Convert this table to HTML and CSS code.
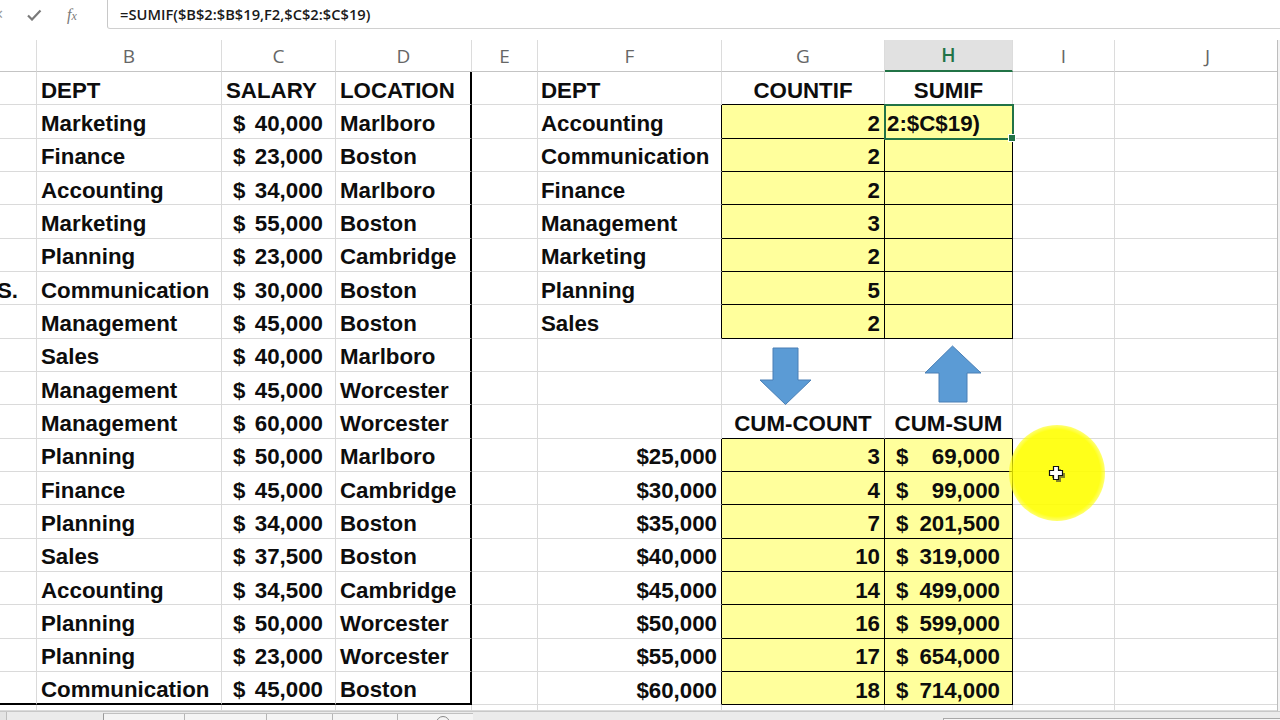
FILE: index.html
```html
<!DOCTYPE html>
<html>
<head>
<meta charset="utf-8">
<link rel="stylesheet" href="styles.css">
</head>
<body>
<div class="app">
  <div class="fbar">
    <div class="fb-icons">
      <span class="ic-x">✕</span>
      <svg class="ic-check" width="16" height="12" viewBox="0 0 16 12"><path d="M2 6.5 L6 10.5 L14.5 1.5" fill="none" stroke="#7a7a7a" stroke-width="2.2"/></svg>
      <span class="ic-fx"><i>f</i><span class="fx-x">x</span></span>
    </div>
    <div class="fb-input">=SUMIF($B$2:$B$19,F2,$C$2:$C$19)</div>
  </div>
  <div class="gap"></div>
  <div class="main">
    <div class="grid">
      <!-- header -->
      <div class="h"></div><div class="h">B</div><div class="h">C</div><div class="h">D</div><div class="h">E</div><div class="h">F</div><div class="h">G</div><div class="h hs">H</div><div class="h">I</div><div class="h">J</div>
      <!-- 1 -->
      <div class="c"></div><div class="c">DEPT</div><div class="c">SALARY</div><div class="c tr">LOCATION</div><div class="c"></div><div class="c fl">DEPT</div><div class="c ctr kb">COUNTIF</div><div class="c ctr kb">SUMIF</div><div class="c"></div><div class="c"></div>
      <!-- 2 -->
      <div class="c"></div><div class="c">Marketing</div><div class="c acc"><span>$</span><span>40,000</span></div><div class="c tr">Marlboro</div><div class="c"></div><div class="c fl kr">Accounting</div><div class="c y r">2</div><div class="c y sel">2:$C$19)</div><div class="c"></div><div class="c"></div>
      <!-- 3 -->
      <div class="c"></div><div class="c">Finance</div><div class="c acc"><span>$</span><span>23,000</span></div><div class="c tr">Boston</div><div class="c"></div><div class="c fl kr">Communication</div><div class="c y r">2</div><div class="c y"></div><div class="c"></div><div class="c"></div>
      <!-- 4 -->
      <div class="c"></div><div class="c">Accounting</div><div class="c acc"><span>$</span><span>34,000</span></div><div class="c tr">Marlboro</div><div class="c"></div><div class="c fl kr">Finance</div><div class="c y r">2</div><div class="c y"></div><div class="c"></div><div class="c"></div>
      <!-- 5 -->
      <div class="c"></div><div class="c">Marketing</div><div class="c acc"><span>$</span><span>55,000</span></div><div class="c tr">Boston</div><div class="c"></div><div class="c fl kr">Management</div><div class="c y r">3</div><div class="c y"></div><div class="c"></div><div class="c"></div>
      <!-- 6 -->
      <div class="c"></div><div class="c">Planning</div><div class="c acc"><span>$</span><span>23,000</span></div><div class="c tr">Cambridge</div><div class="c"></div><div class="c fl kr">Marketing</div><div class="c y r">2</div><div class="c y"></div><div class="c"></div><div class="c"></div>
      <!-- 7 -->
      <div class="c a-over">S.</div><div class="c">Communication</div><div class="c acc"><span>$</span><span>30,000</span></div><div class="c tr">Boston</div><div class="c"></div><div class="c fl kr">Planning</div><div class="c y r">5</div><div class="c y"></div><div class="c"></div><div class="c"></div>
      <!-- 8 -->
      <div class="c"></div><div class="c">Management</div><div class="c acc"><span>$</span><span>45,000</span></div><div class="c tr">Boston</div><div class="c"></div><div class="c fl kr">Sales</div><div class="c y r">2</div><div class="c y"></div><div class="c"></div><div class="c"></div>
      <!-- 9 -->
      <div class="c"></div><div class="c">Sales</div><div class="c acc"><span>$</span><span>40,000</span></div><div class="c tr">Marlboro</div><div class="c"></div><div class="c"></div><div class="c"></div><div class="c"></div><div class="c"></div><div class="c"></div>
      <!-- 10 -->
      <div class="c"></div><div class="c">Management</div><div class="c acc"><span>$</span><span>45,000</span></div><div class="c tr">Worcester</div><div class="c"></div><div class="c"></div><div class="c"></div><div class="c"></div><div class="c"></div><div class="c"></div>
      <!-- 11 -->
      <div class="c"></div><div class="c">Management</div><div class="c acc"><span>$</span><span>60,000</span></div><div class="c tr">Worcester</div><div class="c"></div><div class="c"></div><div class="c ctr kb">CUM-COUNT</div><div class="c ctr kb">CUM-SUM</div><div class="c"></div><div class="c"></div>
      <!-- 12 -->
      <div class="c"></div><div class="c">Planning</div><div class="c acc"><span>$</span><span>50,000</span></div><div class="c tr">Marlboro</div><div class="c"></div><div class="c r kr">$25,000</div><div class="c y r">3</div><div class="c y acc"><span>$</span><span>69,000</span></div><div class="c"></div><div class="c"></div>
      <!-- 13 -->
      <div class="c"></div><div class="c">Finance</div><div class="c acc"><span>$</span><span>45,000</span></div><div class="c tr">Cambridge</div><div class="c"></div><div class="c r kr">$30,000</div><div class="c y r">4</div><div class="c y acc"><span>$</span><span>99,000</span></div><div class="c"></div><div class="c"></div>
      <!-- 14 -->
      <div class="c"></div><div class="c">Planning</div><div class="c acc"><span>$</span><span>34,000</span></div><div class="c tr">Boston</div><div class="c"></div><div class="c r kr">$35,000</div><div class="c y r">7</div><div class="c y acc"><span>$</span><span>201,500</span></div><div class="c"></div><div class="c"></div>
      <!-- 15 -->
      <div class="c"></div><div class="c">Sales</div><div class="c acc"><span>$</span><span>37,500</span></div><div class="c tr">Boston</div><div class="c"></div><div class="c r kr">$40,000</div><div class="c y r">10</div><div class="c y acc"><span>$</span><span>319,000</span></div><div class="c"></div><div class="c"></div>
      <!-- 16 -->
      <div class="c"></div><div class="c">Accounting</div><div class="c acc"><span>$</span><span>34,500</span></div><div class="c tr">Cambridge</div><div class="c"></div><div class="c r kr">$45,000</div><div class="c y r">14</div><div class="c y acc"><span>$</span><span>499,000</span></div><div class="c"></div><div class="c"></div>
      <!-- 17 -->
      <div class="c"></div><div class="c">Planning</div><div class="c acc"><span>$</span><span>50,000</span></div><div class="c tr">Worcester</div><div class="c"></div><div class="c r kr">$50,000</div><div class="c y r">16</div><div class="c y acc"><span>$</span><span>599,000</span></div><div class="c"></div><div class="c"></div>
      <!-- 18 -->
      <div class="c"></div><div class="c">Planning</div><div class="c acc"><span>$</span><span>23,000</span></div><div class="c tr">Worcester</div><div class="c"></div><div class="c r kr">$55,000</div><div class="c y r">17</div><div class="c y acc"><span>$</span><span>654,000</span></div><div class="c"></div><div class="c"></div>
      <!-- 19 -->
      <div class="c tb"></div><div class="c tb">Communication</div><div class="c tb acc"><span>$</span><span>45,000</span></div><div class="c tb tr">Boston</div><div class="c"></div><div class="c r kr">$60,000</div><div class="c y r">18</div><div class="c y acc"><span>$</span><span>714,000</span></div><div class="c"></div><div class="c"></div>
      <!-- 20 partial -->
      <div class="c"></div><div class="c"></div><div class="c"></div><div class="c"></div><div class="c"></div><div class="c"></div><div class="c"></div><div class="c"></div><div class="c"></div><div class="c"></div>
    </div>
    <div class="vscroll"></div>
  </div>
  <div class="bottom">
    <div class="b-left"></div>
    <div class="tabs">
      <div class="tab t1"></div><div class="tab t2"></div><div class="tab t3"></div><div class="tab t4"></div>
      <div class="add"></div>
    </div>
    <div class="b-mid"></div>
    <div class="hscroll"></div>
  </div>

  <svg class="overlay" width="1280" height="720" viewBox="0 0 1280 720">
    <polygon points="773,348 798,348 798,380 811,380 785.5,404.5 760,380 773,380" fill="#5b9bd5" stroke="#4a7fb5" stroke-width="1"/>
    <polygon points="952.5,346 981,373 967,373 967,402 939,402 939,373 925,373" fill="#5b9bd5" stroke="#4a7fb5" stroke-width="1"/>
    <defs>
      <radialGradient id="glow" cx="50%" cy="50%" r="50%">
        <stop offset="0.9" stop-color="#ffff00" stop-opacity="0.9"/>
        <stop offset="1" stop-color="#ffff00" stop-opacity="0.55"/>
      </radialGradient>
    </defs>
    <circle cx="1057" cy="473" r="48" fill="url(#glow)"/>
    <path d="M1054.5 467.5 h5 v4 h4 v5 h-4 v4 h-5 v-4 h-4 v-5 h4 z" fill="#333" transform="translate(1.5,1.5)" opacity="0.6"/>
    <path d="M1053.5 466.5 h5 v4 h4 v5 h-4 v4 h-5 v-4 h-4 v-5 h4 z" fill="#fff" stroke="#111" stroke-width="1.2"/>
  </svg>
</div>
</body>
</html>
```
FILE: styles.css
```css
* { box-sizing: border-box; }
body { margin: 0; background: #fff; overflow: hidden; }
.app {
  position: relative;
  width: 1280px;
  height: 720px;
  overflow: hidden;
  background: #fff;
  font-family: "Liberation Sans", Arial, sans-serif;
}

/* formula bar */
.fbar { display: flex; height: 29px; }
.fb-icons {
  width: 107px;
  display: flex;
  align-items: center;
  color: #7a7a7a;
}
.ic-x { margin-left: -7px; width: 10px; font-size: 13px; color: #999; }
.ic-check { margin-left: 23px; }
.ic-fx {
  margin-left: 25px;
  font-family: "Liberation Serif", serif;
  font-size: 16px;
  color: #7a7a7a;
}
.fx-x { font-style: italic; font-size: 12px; }
.fb-input {
  flex: 1;
  border-left: 1px solid #c8c8c8;
  border-bottom: 1px solid #d0d0d0;
  border-bottom-left-radius: 3px;
  padding-left: 12px;
  padding-bottom: 1px;
  display: flex;
  align-items: center;
  font-family: "Open Sans", sans-serif;
  font-weight: 600;
  font-size: 14.7px;
  color: #1a1a1a;
}
.gap { height: 11px; }

/* sheet */
.main { display: flex; }
.grid {
  width: 1277px;
  overflow: hidden;
  display: grid;
  grid-template-columns: 37px 185px 114px 136px 66px 184px 163px 128px 102px 186px;
  grid-template-rows: 32px repeat(19, 33.33px) 6px;
}
.vscroll { flex: 1; border-left: 1px solid #bdbdbd; background: #f3f3f3; }

.h {
  display: flex;
  align-items: center;
  justify-content: center;
  border-right: 1px solid #dcdcdc;
  border-bottom: 1px solid #c4c4c4;
  font-family: "Open Sans", sans-serif;
  font-size: 19px;
  color: #666;
}
.hs {
  background: #e1e1e1;
  color: #217346;
  font-weight: 600;
  border-bottom: 2px solid #217346;
}

.c {
  display: flex;
  align-items: flex-end;
  padding: 0 4px 1px 4px;
  border-right: 1px solid #dadada;
  border-bottom: 1px solid #dadada;
  font-weight: bold;
  font-size: 22.3px;
  line-height: 1.15;
  color: #0d0d0d;
  white-space: nowrap;
  overflow: hidden;
}
.fl { padding-left: 3px; }
.r { justify-content: flex-end; }
.ctr { justify-content: center; }
.acc { justify-content: space-between; padding-left: 11px; padding-right: 12px; }
.a-over { padding-left: 0; text-indent: -3px; overflow: visible; }

.tr { border-right: 2px solid #000; }
.tb { border-bottom: 2px solid #000; }
.kr { border-right-color: #000; }
.kb { border-bottom-color: #000; }
.y {
  background: #ffff9c;
  border-right-color: #000;
  border-bottom-color: #000;
}
.sel {
  position: relative;
  padding-left: 2px;
  outline: 2px solid #217346;
  outline-offset: -1px;
  z-index: 1;
  overflow: visible;
}
.sel::after {
  content: "";
  position: absolute;
  right: -4px;
  bottom: -4px;
  width: 6px;
  height: 6px;
  background: #217346;
  border: 1px solid #fff;
}

/* bottom strip */
.bottom {
  height: 9px;
  display: flex;
  background: #ebebeb;
  border-top: 1px solid #c8c8c8;
}
.b-left { width: 7px; border-right: 1px solid #bdbdbd; background: #e4e4e4; }
.tabs {
  margin-left: 96px;
  width: 370px;
  display: flex;
  background: #f4f4f4;
  border-left: 1px solid #9a9a9a;
  border-top: 1px solid #c0c0c0;
  margin-top: 1px;
}
.tab { border-right: 1px solid #b5b5b5; }
.t1 { width: 81px; }
.t2 { width: 82px; }
.t3 { width: 66px; }
.t4 { width: 65px; }
.add {
  margin-left: 38px;
  margin-top: 2px;
  width: 14px;
  height: 14px;
  border: 1px solid #888;
  border-radius: 50%;
}
.b-mid { flex: 1; }
.hscroll {
  width: 337px;
  margin-top: 6px;
  background: #f6f6f6;
  border-top: 1px solid #a8a8a8;
  border-left: 1px solid #a8a8a8;
}

.overlay { position: absolute; left: 0; top: 0; pointer-events: none; }
```
